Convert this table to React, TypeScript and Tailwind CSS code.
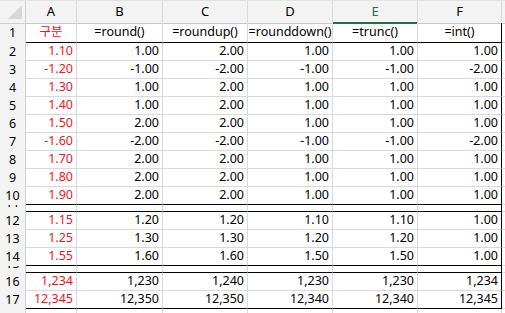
const COLS = ['A', 'B', 'C', 'D', 'E', 'F']

type Row = { n: number; cells?: string[]; thin?: boolean; bottomBlack?: boolean }

const ROWS: Row[] = [
  { n: 1, cells: ['구분', '=round()', '=roundup()', '=rounddown()', '=trunc()', '=int()'], bottomBlack: true },
  { n: 2, cells: ['1.10', '1.00', '2.00', '1.00', '1.00', '1.00'] },
  { n: 3, cells: ['-1.20', '-1.00', '-2.00', '-1.00', '-1.00', '-2.00'] },
  { n: 4, cells: ['1.30', '1.00', '2.00', '1.00', '1.00', '1.00'] },
  { n: 5, cells: ['1.40', '1.00', '2.00', '1.00', '1.00', '1.00'] },
  { n: 6, cells: ['1.50', '2.00', '2.00', '1.00', '1.00', '1.00'] },
  { n: 7, cells: ['-1.60', '-2.00', '-2.00', '-1.00', '-1.00', '-2.00'] },
  { n: 8, cells: ['1.70', '2.00', '2.00', '1.00', '1.00', '1.00'] },
  { n: 9, cells: ['1.80', '2.00', '2.00', '1.00', '1.00', '1.00'] },
  { n: 10, cells: ['1.90', '2.00', '2.00', '1.00', '1.00', '1.00'], bottomBlack: true },
  { n: 11, thin: true, bottomBlack: true },
  { n: 12, cells: ['1.15', '1.20', '1.20', '1.10', '1.10', '1.00'] },
  { n: 13, cells: ['1.25', '1.30', '1.30', '1.20', '1.20', '1.00'] },
  { n: 14, cells: ['1.55', '1.60', '1.60', '1.50', '1.50', '1.00'], bottomBlack: true },
  { n: 15, thin: true, bottomBlack: true },
  { n: 16, cells: ['1,234', '1,230', '1,240', '1,230', '1,230', '1,234'] },
  { n: 17, cells: ['12,345', '12,350', '12,350', '12,340', '12,340', '12,345'], bottomBlack: true },
  { n: 18 },
]

const GRID = 'grid grid-cols-[26px_51px_86px_85px_85px_85px_84px_1fr]'

// row numbers of the collapsed rows (11, 15) are clipped like Excel does
function DataRow({ row }: { row: Row }) {
  const height = row.thin ? 'h-[7px]' : row.n === 1 ? 'h-[20px]' : 'h-[18px]'
  const inTable = row.n <= 17
  return (
    <div className={`${GRID} ${height}`}>
      <div
        className={`flex justify-center overflow-hidden border-r border-[#d0d0d0] bg-[#f3f3f3] leading-[18px] ${row.thin ? 'items-end' : 'items-center'}`}
      >
        {inTable ? row.n : ''}
      </div>
      {COLS.map((col, i) => {
        const text = row.cells?.[i] ?? ''
        const header = row.n === 1
        return (
          <div
            key={col}
            className={`flex items-center overflow-hidden border-r border-b pr-[3px] ${
              row.bottomBlack ? 'border-b-black' : 'border-b-[#d9d9d9]'
            } ${col === 'F' && inTable ? 'border-r-black' : 'border-r-[#d9d9d9]'} ${
              header ? 'justify-center pl-[3px]' : 'justify-end'
            } ${col === 'A' ? 'text-[#f0141e]' : 'text-black'}`}
          >
            {text}
          </div>
        )
      })}
      <div className="border-b border-[#d9d9d9]" />
    </div>
  )
}

export default function App() {
  return (
    <div className="h-[313px] w-[505px] overflow-hidden bg-white text-[12.5px] text-black [font-family:'Noto_Sans','Noto_Sans_CJK_KR',sans-serif]">
      <div className={`${GRID} h-[23px] border-t border-[#e2e2e2] bg-[#f3f3f3] text-[13px]`}>
        <div className="relative border-r border-b border-[#d0d0d0]">
          <svg className="absolute left-0 top-0" width="25" height="22" viewBox="0 0 25 22">
            <polygon points="8,18 22,18 22,4" fill="#d6d6d6" />
          </svg>
        </div>
        {COLS.map((col) =>
          col === 'E' ? (
            <div
              key={col}
              className="flex items-center justify-center border-r border-b-2 border-r-[#d9d9d9] border-b-[#217346] pt-[1px] text-[#217346]"
            >
              {col}
            </div>
          ) : (
            <div
              key={col}
              className="flex items-center justify-center border-r border-b border-r-[#d9d9d9] border-b-[#c8c8c8]"
            >
              {col}
            </div>
          ),
        )}
        <div className="border-b border-[#c8c8c8]" />
      </div>
      {ROWS.map((row) => (
        <DataRow key={row.n} row={row} />
      ))}
    </div>
  )
}
